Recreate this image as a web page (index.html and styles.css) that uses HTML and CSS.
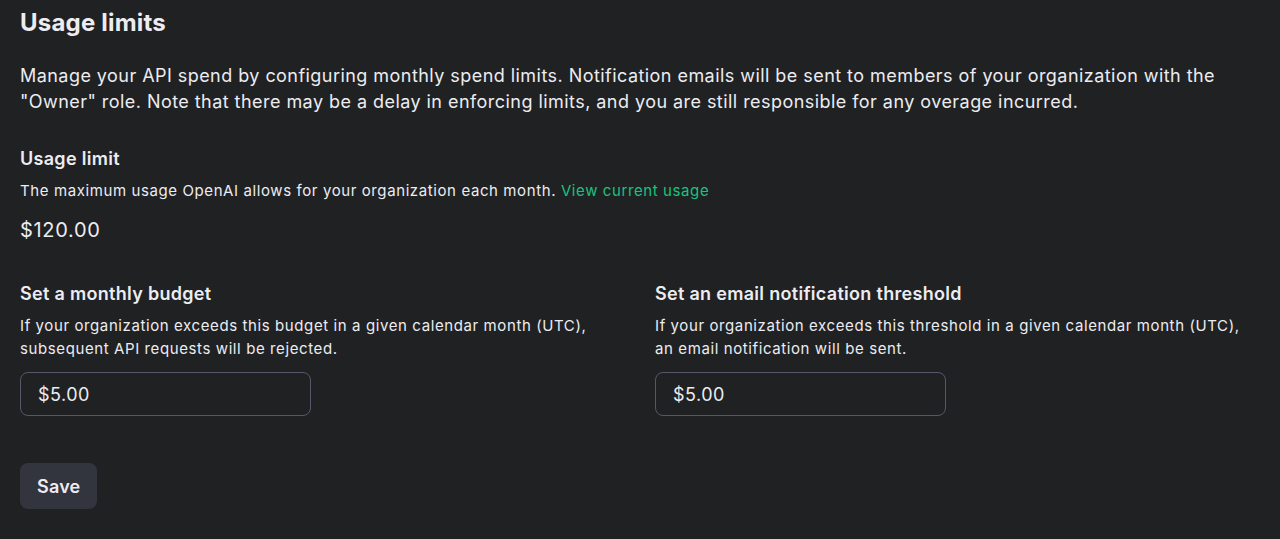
FILE: index.html
```html
<!DOCTYPE html>
<html lang="en">
<head>
    <meta charset="UTF-8">
    <meta name="viewport" content="width=device-width, initial-scale=1.0">
    <title>Usage limits</title>
    <link rel="stylesheet" href="styles.css">
</head>
<body>
    <section class="limits">
        <h1>Usage limits</h1>
        <p class="intro">Manage your API spend by configuring monthly spend limits. Notification emails will be sent to members of your organization with the "Owner" role. Note that there may be a delay in enforcing limits, and you are still responsible for any overage incurred.</p>

        <div class="block">
            <h3>Usage limit</h3>
            <p class="hint">The maximum usage OpenAI allows for your organization each month. <a href="#">View current usage</a></p>
            <p class="amount">$120.00</p>
        </div>

        <div class="columns">
            <div class="field">
                <h3>Set a monthly budget</h3>
                <p class="hint">If your organization exceeds this budget in a given calendar month (UTC), subsequent API requests will be rejected.</p>
                <input class="money" type="text" value="$5.00"/>
            </div>
            <div class="field">
                <h3>Set an email notification threshold</h3>
                <p class="hint">If your organization exceeds this threshold in a given calendar month (UTC), an email notification will be sent.</p>
                <input class="money" type="text" value="$5.00"/>
            </div>
        </div>

        <button class="save" type="button">Save</button>
    </section>
</body>
</html>
```

FILE: styles.css
```css
body {
    background-color: #202123;
    color: #ECECF1;
    font-family: Inter, 'Noto Sans', sans-serif;
    margin: 0;
    padding: 0;
}

.limits {
    padding: 7px 20px 0 20px;
}

h1 {
    font-size: 24px;
    font-weight: 700;
    letter-spacing: 0.2px;
    line-height: 32px;
    margin: 0;
}

.intro {
    font-size: 18px;
    letter-spacing: 0.45px;
    line-height: 26px;
    margin: 24px 0 0 0;
    max-width: 1230px;
}

.block {
    margin-top: 32px;
}

h3 {
    font-size: 18px;
    font-weight: 600;
    letter-spacing: 0.3px;
    line-height: 24px;
    margin: 0;
}

.hint {
    font-size: 15px;
    letter-spacing: 0.6px;
    line-height: 23px;
    margin: 8px 0 0 0;
}

.hint a {
    color: #19C37D;
    text-decoration: none;
}

.amount {
    font-size: 20px;
    letter-spacing: 0.7px;
    line-height: 28px;
    margin: 14px 0 0 0;
}

.columns {
    display: grid;
    grid-template-columns: 1fr 1fr;
    column-gap: 30px;
    margin-top: 38px;
}

.money {
    background-color: #202123;
    border: 1px solid #565869;
    border-radius: 8px;
    box-sizing: border-box;
    color: #ECECF1;
    display: block;
    font-family: inherit;
    font-size: 18px;
    letter-spacing: 0.5px;
    height: 44px;
    margin-top: 12px;
    padding: 0 17px;
    width: 291px;
}

.save {
    background-color: #32343E;
    border: none;
    border-radius: 8px;
    color: #ECECF1;
    font-family: inherit;
    font-size: 18px;
    font-weight: 600;
    letter-spacing: 0.2px;
    height: 46px;
    margin-top: 47px;
    padding: 0 17px;
}
```
